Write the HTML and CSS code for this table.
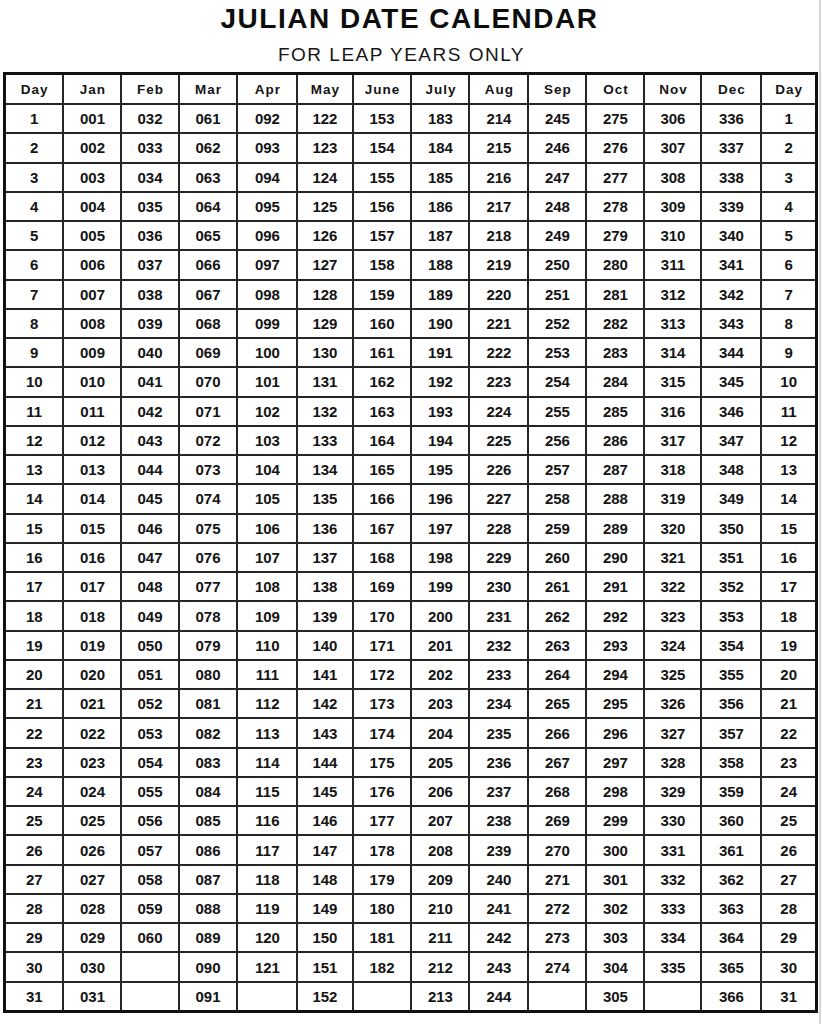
FILE: index.html
```html
<!DOCTYPE html>
<html lang="en">
<head>
<meta charset="utf-8">
<title>Julian Date Calendar</title>
<link rel="stylesheet" href="styles.css">
</head>
<body>
<div class="page">
<h1 class="title">JULIAN DATE CALENDAR</h1>
<p class="subtitle">FOR LEAP YEARS ONLY</p>
<div class="cal">
<div class="h">Day</div><div class="h">Jan</div><div class="h">Feb</div><div class="h">Mar</div><div class="h">Apr</div><div class="h">May</div><div class="h">June</div><div class="h">July</div><div class="h">Aug</div><div class="h">Sep</div><div class="h">Oct</div><div class="h">Nov</div><div class="h">Dec</div><div class="h">Day</div>
<div class="c">1</div><div class="c">001</div><div class="c">032</div><div class="c">061</div><div class="c">092</div><div class="c">122</div><div class="c">153</div><div class="c">183</div><div class="c">214</div><div class="c">245</div><div class="c">275</div><div class="c">306</div><div class="c">336</div><div class="c">1</div>
<div class="c">2</div><div class="c">002</div><div class="c">033</div><div class="c">062</div><div class="c">093</div><div class="c">123</div><div class="c">154</div><div class="c">184</div><div class="c">215</div><div class="c">246</div><div class="c">276</div><div class="c">307</div><div class="c">337</div><div class="c">2</div>
<div class="c">3</div><div class="c">003</div><div class="c">034</div><div class="c">063</div><div class="c">094</div><div class="c">124</div><div class="c">155</div><div class="c">185</div><div class="c">216</div><div class="c">247</div><div class="c">277</div><div class="c">308</div><div class="c">338</div><div class="c">3</div>
<div class="c">4</div><div class="c">004</div><div class="c">035</div><div class="c">064</div><div class="c">095</div><div class="c">125</div><div class="c">156</div><div class="c">186</div><div class="c">217</div><div class="c">248</div><div class="c">278</div><div class="c">309</div><div class="c">339</div><div class="c">4</div>
<div class="c">5</div><div class="c">005</div><div class="c">036</div><div class="c">065</div><div class="c">096</div><div class="c">126</div><div class="c">157</div><div class="c">187</div><div class="c">218</div><div class="c">249</div><div class="c">279</div><div class="c">310</div><div class="c">340</div><div class="c">5</div>
<div class="c">6</div><div class="c">006</div><div class="c">037</div><div class="c">066</div><div class="c">097</div><div class="c">127</div><div class="c">158</div><div class="c">188</div><div class="c">219</div><div class="c">250</div><div class="c">280</div><div class="c">311</div><div class="c">341</div><div class="c">6</div>
<div class="c">7</div><div class="c">007</div><div class="c">038</div><div class="c">067</div><div class="c">098</div><div class="c">128</div><div class="c">159</div><div class="c">189</div><div class="c">220</div><div class="c">251</div><div class="c">281</div><div class="c">312</div><div class="c">342</div><div class="c">7</div>
<div class="c">8</div><div class="c">008</div><div class="c">039</div><div class="c">068</div><div class="c">099</div><div class="c">129</div><div class="c">160</div><div class="c">190</div><div class="c">221</div><div class="c">252</div><div class="c">282</div><div class="c">313</div><div class="c">343</div><div class="c">8</div>
<div class="c">9</div><div class="c">009</div><div class="c">040</div><div class="c">069</div><div class="c">100</div><div class="c">130</div><div class="c">161</div><div class="c">191</div><div class="c">222</div><div class="c">253</div><div class="c">283</div><div class="c">314</div><div class="c">344</div><div class="c">9</div>
<div class="c">10</div><div class="c">010</div><div class="c">041</div><div class="c">070</div><div class="c">101</div><div class="c">131</div><div class="c">162</div><div class="c">192</div><div class="c">223</div><div class="c">254</div><div class="c">284</div><div class="c">315</div><div class="c">345</div><div class="c">10</div>
<div class="c">11</div><div class="c">011</div><div class="c">042</div><div class="c">071</div><div class="c">102</div><div class="c">132</div><div class="c">163</div><div class="c">193</div><div class="c">224</div><div class="c">255</div><div class="c">285</div><div class="c">316</div><div class="c">346</div><div class="c">11</div>
<div class="c">12</div><div class="c">012</div><div class="c">043</div><div class="c">072</div><div class="c">103</div><div class="c">133</div><div class="c">164</div><div class="c">194</div><div class="c">225</div><div class="c">256</div><div class="c">286</div><div class="c">317</div><div class="c">347</div><div class="c">12</div>
<div class="c">13</div><div class="c">013</div><div class="c">044</div><div class="c">073</div><div class="c">104</div><div class="c">134</div><div class="c">165</div><div class="c">195</div><div class="c">226</div><div class="c">257</div><div class="c">287</div><div class="c">318</div><div class="c">348</div><div class="c">13</div>
<div class="c">14</div><div class="c">014</div><div class="c">045</div><div class="c">074</div><div class="c">105</div><div class="c">135</div><div class="c">166</div><div class="c">196</div><div class="c">227</div><div class="c">258</div><div class="c">288</div><div class="c">319</div><div class="c">349</div><div class="c">14</div>
<div class="c">15</div><div class="c">015</div><div class="c">046</div><div class="c">075</div><div class="c">106</div><div class="c">136</div><div class="c">167</div><div class="c">197</div><div class="c">228</div><div class="c">259</div><div class="c">289</div><div class="c">320</div><div class="c">350</div><div class="c">15</div>
<div class="c">16</div><div class="c">016</div><div class="c">047</div><div class="c">076</div><div class="c">107</div><div class="c">137</div><div class="c">168</div><div class="c">198</div><div class="c">229</div><div class="c">260</div><div class="c">290</div><div class="c">321</div><div class="c">351</div><div class="c">16</div>
<div class="c">17</div><div class="c">017</div><div class="c">048</div><div class="c">077</div><div class="c">108</div><div class="c">138</div><div class="c">169</div><div class="c">199</div><div class="c">230</div><div class="c">261</div><div class="c">291</div><div class="c">322</div><div class="c">352</div><div class="c">17</div>
<div class="c">18</div><div class="c">018</div><div class="c">049</div><div class="c">078</div><div class="c">109</div><div class="c">139</div><div class="c">170</div><div class="c">200</div><div class="c">231</div><div class="c">262</div><div class="c">292</div><div class="c">323</div><div class="c">353</div><div class="c">18</div>
<div class="c">19</div><div class="c">019</div><div class="c">050</div><div class="c">079</div><div class="c">110</div><div class="c">140</div><div class="c">171</div><div class="c">201</div><div class="c">232</div><div class="c">263</div><div class="c">293</div><div class="c">324</div><div class="c">354</div><div class="c">19</div>
<div class="c">20</div><div class="c">020</div><div class="c">051</div><div class="c">080</div><div class="c">111</div><div class="c">141</div><div class="c">172</div><div class="c">202</div><div class="c">233</div><div class="c">264</div><div class="c">294</div><div class="c">325</div><div class="c">355</div><div class="c">20</div>
<div class="c">21</div><div class="c">021</div><div class="c">052</div><div class="c">081</div><div class="c">112</div><div class="c">142</div><div class="c">173</div><div class="c">203</div><div class="c">234</div><div class="c">265</div><div class="c">295</div><div class="c">326</div><div class="c">356</div><div class="c">21</div>
<div class="c">22</div><div class="c">022</div><div class="c">053</div><div class="c">082</div><div class="c">113</div><div class="c">143</div><div class="c">174</div><div class="c">204</div><div class="c">235</div><div class="c">266</div><div class="c">296</div><div class="c">327</div><div class="c">357</div><div class="c">22</div>
<div class="c">23</div><div class="c">023</div><div class="c">054</div><div class="c">083</div><div class="c">114</div><div class="c">144</div><div class="c">175</div><div class="c">205</div><div class="c">236</div><div class="c">267</div><div class="c">297</div><div class="c">328</div><div class="c">358</div><div class="c">23</div>
<div class="c">24</div><div class="c">024</div><div class="c">055</div><div class="c">084</div><div class="c">115</div><div class="c">145</div><div class="c">176</div><div class="c">206</div><div class="c">237</div><div class="c">268</div><div class="c">298</div><div class="c">329</div><div class="c">359</div><div class="c">24</div>
<div class="c">25</div><div class="c">025</div><div class="c">056</div><div class="c">085</div><div class="c">116</div><div class="c">146</div><div class="c">177</div><div class="c">207</div><div class="c">238</div><div class="c">269</div><div class="c">299</div><div class="c">330</div><div class="c">360</div><div class="c">25</div>
<div class="c">26</div><div class="c">026</div><div class="c">057</div><div class="c">086</div><div class="c">117</div><div class="c">147</div><div class="c">178</div><div class="c">208</div><div class="c">239</div><div class="c">270</div><div class="c">300</div><div class="c">331</div><div class="c">361</div><div class="c">26</div>
<div class="c">27</div><div class="c">027</div><div class="c">058</div><div class="c">087</div><div class="c">118</div><div class="c">148</div><div class="c">179</div><div class="c">209</div><div class="c">240</div><div class="c">271</div><div class="c">301</div><div class="c">332</div><div class="c">362</div><div class="c">27</div>
<div class="c">28</div><div class="c">028</div><div class="c">059</div><div class="c">088</div><div class="c">119</div><div class="c">149</div><div class="c">180</div><div class="c">210</div><div class="c">241</div><div class="c">272</div><div class="c">302</div><div class="c">333</div><div class="c">363</div><div class="c">28</div>
<div class="c">29</div><div class="c">029</div><div class="c">060</div><div class="c">089</div><div class="c">120</div><div class="c">150</div><div class="c">181</div><div class="c">211</div><div class="c">242</div><div class="c">273</div><div class="c">303</div><div class="c">334</div><div class="c">364</div><div class="c">29</div>
<div class="c">30</div><div class="c">030</div><div class="c"></div><div class="c">090</div><div class="c">121</div><div class="c">151</div><div class="c">182</div><div class="c">212</div><div class="c">243</div><div class="c">274</div><div class="c">304</div><div class="c">335</div><div class="c">365</div><div class="c">30</div>
<div class="c">31</div><div class="c">031</div><div class="c"></div><div class="c">091</div><div class="c"></div><div class="c">152</div><div class="c"></div><div class="c">213</div><div class="c">244</div><div class="c"></div><div class="c">305</div><div class="c"></div><div class="c">366</div><div class="c">31</div>
</div>
</div>
</body>
</html>
```

FILE: styles.css
```css
html, body {
  margin: 0;
  padding: 0;
  background: #ffffff;
}

.page {
  width: 819px;
  height: 1024px;
  border-right: 2px solid #d6d6d6;
  color: #111111;
  font-family: "Liberation Sans", Arial, sans-serif;
}

.title {
  margin: 0;
  padding-top: 3px;
  font-size: 28px;
  line-height: 32px;
  font-weight: bold;
  letter-spacing: 1.5px;
  text-align: center;
  color: #0d0d0d;
}

.subtitle {
  margin: 9px 0 0 0;
  padding-right: 16px;
  font-size: 19px;
  line-height: 22px;
  font-weight: normal;
  letter-spacing: 1.5px;
  text-align: center;
  color: #161616;
}

.cal {
  margin: 6px 0 0 3px;
  width: 809px;
  height: 935px;
  border: 3px solid #111111;
  background: #262626;
  display: grid;
  grid-template-columns: 58.5fr 58fr 57fr 59fr 60fr 55fr 59fr 58fr 59fr 58fr 58fr 57fr 60fr 54.5fr;
  grid-template-rows: 28px repeat(31, 1fr);
  gap: 2px;
}

.h,
.c {
  background: #ffffff;
  display: flex;
  align-items: center;
  justify-content: center;
  font-weight: bold;
  color: #141414;
}

.h {
  font-size: 13.5px;
  letter-spacing: 1px;
  padding-left: 1px;
}

.c {
  font-size: 15px;
}
```
